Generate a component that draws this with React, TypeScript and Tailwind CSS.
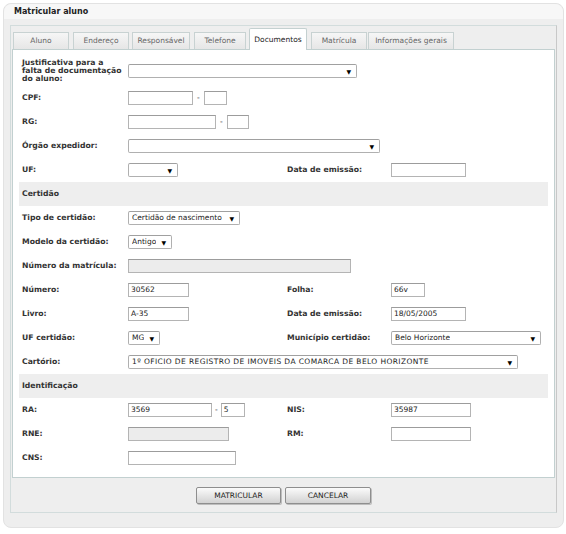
import type { ReactNode } from 'react';

function Label({ children }: { children: ReactNode }) {
  return <div className="text-[7.7px] font-bold text-[#333]">{children}</div>;
}

function TextBox({ w, value, disabled }: { w: string; value?: string; disabled?: boolean }) {
  return (
    <div
      className={`flex h-[14px] items-center border border-[#b4b4b4] border-t-[#9c9c9c] pl-[2px] text-[#222] ${
        disabled ? 'bg-[#ececec]' : 'bg-white'
      } ${w}`}
    >
      {value}
    </div>
  );
}

function Select({ w, value, wide }: { w: string; value?: string; wide?: boolean }) {
  return (
    <div
      className={`flex h-[14px] items-center justify-between rounded-[2px] border border-[#b0b0b0] border-t-[#a0a0a0] bg-white pl-[3px] pr-[5px] text-[#222] ${w}`}
    >
      <span className={`truncate ${wide ? 'tracking-[0.4px]' : ''}`}>{value}</span>
      <span className="text-[6px] text-black">▼</span>
    </div>
  );
}

function Row({ label, left, rightLabel, right }: { label: ReactNode; left: ReactNode; rightLabel?: string; right?: ReactNode }) {
  return (
    <div className="flex h-[24px] items-center pl-[3px]">
      <div className="w-[106px] shrink-0">
        <Label>{label}</Label>
      </div>
      <div className="flex w-[159px] shrink-0 items-center">{left}</div>
      {rightLabel && (
        <>
          <div className="w-[104px] shrink-0">
            <Label>{rightLabel}</Label>
          </div>
          <div className="flex items-center">{right}</div>
        </>
      )}
    </div>
  );
}

function Band({ title }: { title: string }) {
  return (
    <div className="flex h-[24px] items-center bg-[#eeeeee] pl-[3px] text-[7.7px] font-bold text-[#333]">{title}</div>
  );
}

const tabs = ['Aluno', 'Endereço', 'Responsável', 'Telefone', 'Documentos', 'Matrícula', 'Informações gerais'];
const tabWidths = ['w-[56px]', 'w-[56px]', 'w-[58px]', 'w-[52px]', 'w-[58px]', 'w-[56px]', 'w-[86px]'];
const tabGaps = ['ml-[1px]', 'ml-[4px]', 'ml-[3px]', 'ml-[4px]', 'ml-[3px]', 'ml-[4px]', 'ml-[1px]'];

export default function App() {
  return (
    <div className="min-h-[534px] bg-white pt-[3px] font-['DejaVu_Sans',Verdana,sans-serif] text-[7.5px]">
      <div className="ml-[3px] w-[561px] rounded-[8px] border border-[#e2e2e2] bg-[#eeeeee]">
        <div className="flex h-[15px] items-center rounded-t-[8px] bg-[#f7f7f7] pl-[10px] text-[8px] font-bold text-[#222]">
          Matricular aluno
        </div>
        <div className="px-[6px] pb-[14px] pt-[6px]">
          <div className="border border-[#d2dcdc] border-r-[#c8c8c8] bg-[#eeeeee] px-[1px] pt-[2px]">
            <div className="flex h-[21px] items-end">
              {tabs.map((t, i) =>
                t === 'Documentos' ? (
                  <div
                    key={t}
                    className={`relative z-10 -mb-px flex h-[22px] items-center justify-center rounded-t-[2px] border border-b-0 border-[#c4d0d0] bg-white text-[#222] ${tabWidths[i]} ${tabGaps[i]}`}
                  >
                    {t}
                  </div>
                ) : (
                  <div
                    key={t}
                    className={`flex h-[17px] items-center justify-center border border-b-0 border-[#c8d2d2] bg-linear-to-b from-[#f6f6f6] to-[#e6e6e6] text-[#666] ${tabWidths[i]} ${tabGaps[i]}`}
                  >
                    {t}
                  </div>
                )
              )}
            </div>
            <div className="border border-[#c2d0d0] bg-white px-[6px] pb-[7px] pt-[6px]">
              <div className="flex h-[30px] items-center pl-[3px]">
                <div className="w-[106px] shrink-0 text-[7.7px] font-bold leading-[8px] text-[#333]">
                  Justificativa para a<br />falta de documentação<br />do aluno:
                </div>
                <Select w="w-[229px]" />
              </div>
              <Row
                label="CPF:"
                left={
                  <>
                    <TextBox w="w-[65px]" />
                    <span className="mx-[4px] text-[#222]">-</span>
                    <TextBox w="w-[23px]" />
                  </>
                }
              />
              <Row
                label="RG:"
                left={
                  <>
                    <TextBox w="w-[88px]" />
                    <span className="mx-[4px] text-[#222]">-</span>
                    <TextBox w="w-[22px]" />
                  </>
                }
              />
              <div className="flex h-[24px] items-center pl-[3px]">
                <div className="w-[106px] shrink-0">
                  <Label>Órgão expedidor:</Label>
                </div>
                <Select w="w-[252px]" />
              </div>
              <Row label="UF:" left={<Select w="w-[50px]" />} rightLabel="Data de emissão:" right={<TextBox w="w-[75px]" />} />
              <Band title="Certidão" />
              <Row label="Tipo de certidão:" left={<Select w="w-[112px]" value="Certidão de nascimento" />} />
              <Row label="Modelo da certidão:" left={<Select w="w-[44px]" value="Antigo" />} />
              <div className="flex h-[24px] items-center pl-[3px]">
                <div className="w-[106px] shrink-0">
                  <Label>Número da matrícula:</Label>
                </div>
                <TextBox w="w-[223px]" disabled />
              </div>
              <Row
                label="Número:"
                left={<TextBox w="w-[61px]" value="30562" />}
                rightLabel="Folha:"
                right={<TextBox w="w-[34px]" value="66v" />}
              />
              <Row
                label="Livro:"
                left={<TextBox w="w-[61px]" value="A-35" />}
                rightLabel="Data de emissão:"
                right={<TextBox w="w-[75px]" value="18/05/2005" />}
              />
              <Row
                label="UF certidão:"
                left={<Select w="w-[32px]" value="MG" />}
                rightLabel="Município certidão:"
                right={<Select w="w-[150px]" value="Belo Horizonte" />}
              />
              <div className="flex h-[24px] items-center pl-[3px]">
                <div className="w-[106px] shrink-0">
                  <Label>Cartório:</Label>
                </div>
                <Select w="w-[390px]" wide value="1º OFICIO DE REGISTRO DE IMOVEIS DA COMARCA DE BELO HORIZONTE" />
              </div>
              <Band title="Identificação" />
              <Row
                label="RA:"
                left={
                  <>
                    <TextBox w="w-[84px]" value="3569" />
                    <span className="mx-[3px] text-[#222]">-</span>
                    <TextBox w="w-[24px]" value="5" />
                  </>
                }
                rightLabel="NIS:"
                right={<TextBox w="w-[80px]" value="35987" />}
              />
              <Row label="RNE:" left={<TextBox w="w-[101px]" disabled />} rightLabel="RM:" right={<TextBox w="w-[80px]" />} />
              <Row label="CNS:" left={<TextBox w="w-[108px]" />} />
            </div>
            <div className="flex justify-center gap-[4px] pb-[8px] pt-[9px]">
              <button className="h-[17px] w-[85px] rounded-[2px] border border-[#8e8e8e] bg-linear-to-b from-[#fbfbfb] to-[#d2d2d2] text-[7.5px] text-[#222] shadow-[1px_1px_0_#bdbdbd]">
                MATRICULAR
              </button>
              <button className="h-[17px] w-[86px] rounded-[2px] border border-[#8e8e8e] bg-linear-to-b from-[#fbfbfb] to-[#d2d2d2] text-[7.5px] text-[#222] shadow-[1px_1px_0_#bdbdbd]">
                CANCELAR
              </button>
            </div>
          </div>
        </div>
      </div>
    </div>
  );
}
